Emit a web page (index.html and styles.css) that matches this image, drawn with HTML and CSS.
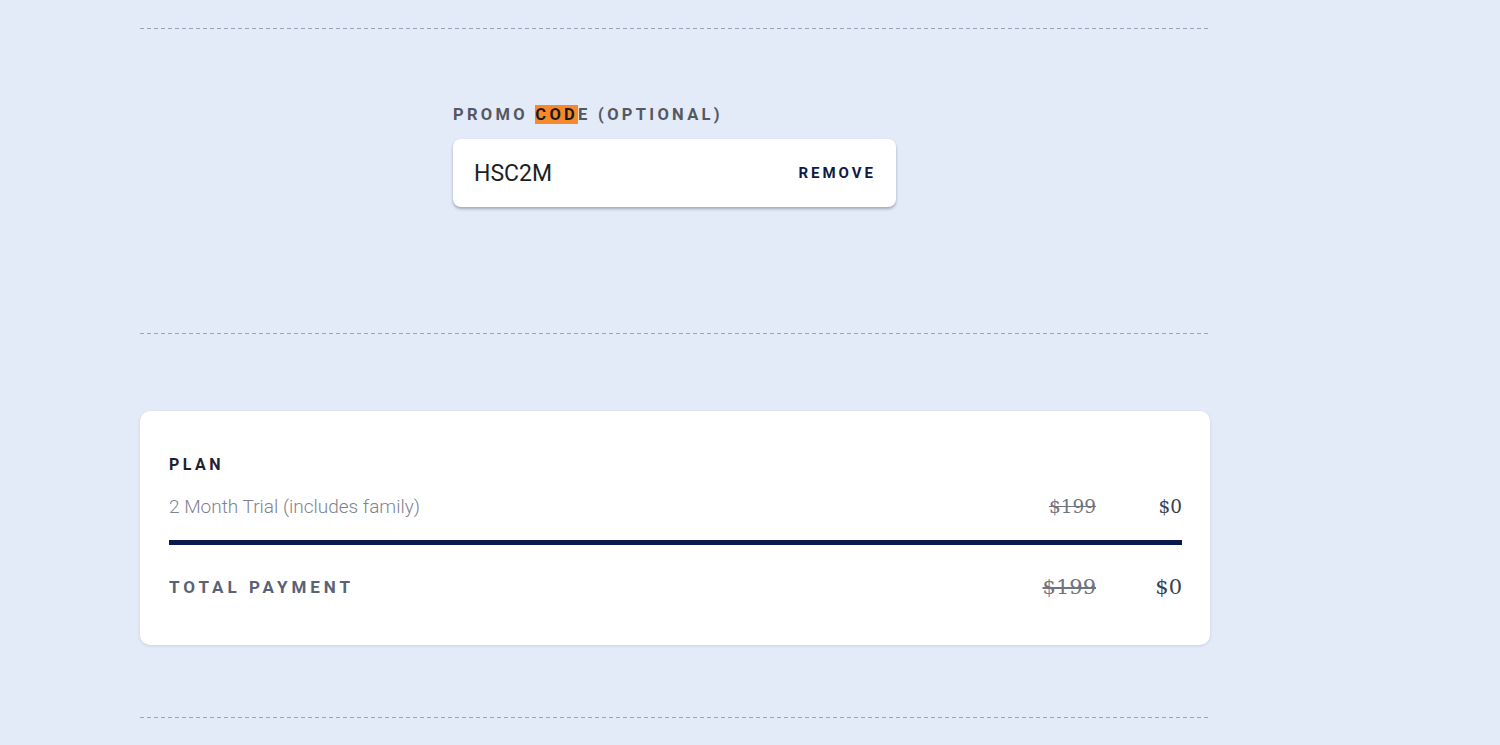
FILE: index.html
```html
<!DOCTYPE html>
<html>
<head>
<meta charset="utf-8">
<link rel="stylesheet" href="styles.css">
</head>
<body>
<div class="page">
  <div class="divider first"></div>
  <section class="promo">
    <label class="promo-label">PROMO <mark class="hl">COD</mark>E (OPTIONAL)</label>
    <div class="promo-input">
      <span class="promo-value">HSC2M</span>
      <span class="promo-remove">REMOVE</span>
    </div>
  </section>
  <div class="divider"></div>
  <section class="summary">
    <div class="summary-heading">PLAN</div>
    <div class="row plan-row">
      <span class="row-label">2 Month Trial (includes family)</span>
      <span class="old-price">$199</span>
      <span class="new-price">$0</span>
    </div>
    <div class="rule"></div>
    <div class="row total-row">
      <span class="row-label total-label">TOTAL PAYMENT</span>
      <span class="old-price">$199</span>
      <span class="new-price">$0</span>
    </div>
  </section>
  <div class="divider last"></div>
</div>
</body>
</html>
```
FILE: styles.css
```css
html, body {
  margin: 0;
  padding: 0;
}
body {
  background: #e3eaf8;
  font-family: Roboto, "Noto Sans", Arial, sans-serif;
  width: 1500px;
  height: 745px;
  overflow: hidden;
}
.page {
  width: 1070px;
  margin-left: 140px;
  padding-top: 28px;
}
.divider {
  height: 1px;
  background: repeating-linear-gradient(to right, #9ba4b6 0 4px, transparent 4px 7px);
}
.promo {
  height: 304px;
  padding-left: 313px;
  box-sizing: border-box;
  padding-top: 76px;
}
.promo-label {
  display: block;
  font-size: 16.5px;
  line-height: 20px;
  font-weight: 700;
  letter-spacing: 3.3px;
  color: #55585f;
}
.hl {
  background: #f7892a;
  color: #1a1a1a;
  padding: 0;
}
.promo-input {
  margin-top: 14px;
  width: 443px;
  height: 68px;
  box-sizing: border-box;
  background: #fff;
  border-radius: 8px;
  box-shadow: 0 2px 3px rgba(40, 50, 80, 0.35);
  display: flex;
  align-items: center;
  justify-content: space-between;
  padding: 0 20px 0 21px;
}
.promo-value {
  font-size: 23px;
  color: #1c1f26;
}
.promo-remove {
  font-size: 15px;
  font-weight: 700;
  letter-spacing: 3px;
  color: #0d1b45;
}
.summary {
  margin-top: 77px;
  margin-bottom: 72px;
  background: #fff;
  border-radius: 10px;
  box-shadow: 0 1px 3px rgba(60, 70, 100, 0.15);
  padding: 44px 28px 46px 29px;
}
.summary-heading {
  font-size: 16px;
  line-height: 20px;
  font-weight: 700;
  letter-spacing: 3.5px;
  color: #1e2230;
}
.row {
  display: flex;
  align-items: center;
  line-height: 24px;
}
.plan-row {
  margin-top: 20px;
}
.row-label {
  flex: 1;
  font-size: 19px;
  font-weight: 300;
  color: #7d8391;
}
.total-label {
  font-size: 17px;
  font-weight: 700;
  letter-spacing: 4px;
  color: #5a6276;
}
.old-price {
  font-family: "DejaVu Serif", serif;
  font-size: 18.5px;
  color: #6f7480;
  text-decoration: line-through;
}
.new-price {
  font-family: "DejaVu Serif", serif;
  font-size: 18.5px;
  color: #3a3f4c;
  min-width: 86px;
  text-align: right;
}
.total-row .old-price,
.total-row .new-price {
  font-size: 21px;
}
.rule {
  margin-top: 21px;
  height: 5px;
  background: #0b1a4e;
}
.total-row {
  margin-top: 30px;
}
```
